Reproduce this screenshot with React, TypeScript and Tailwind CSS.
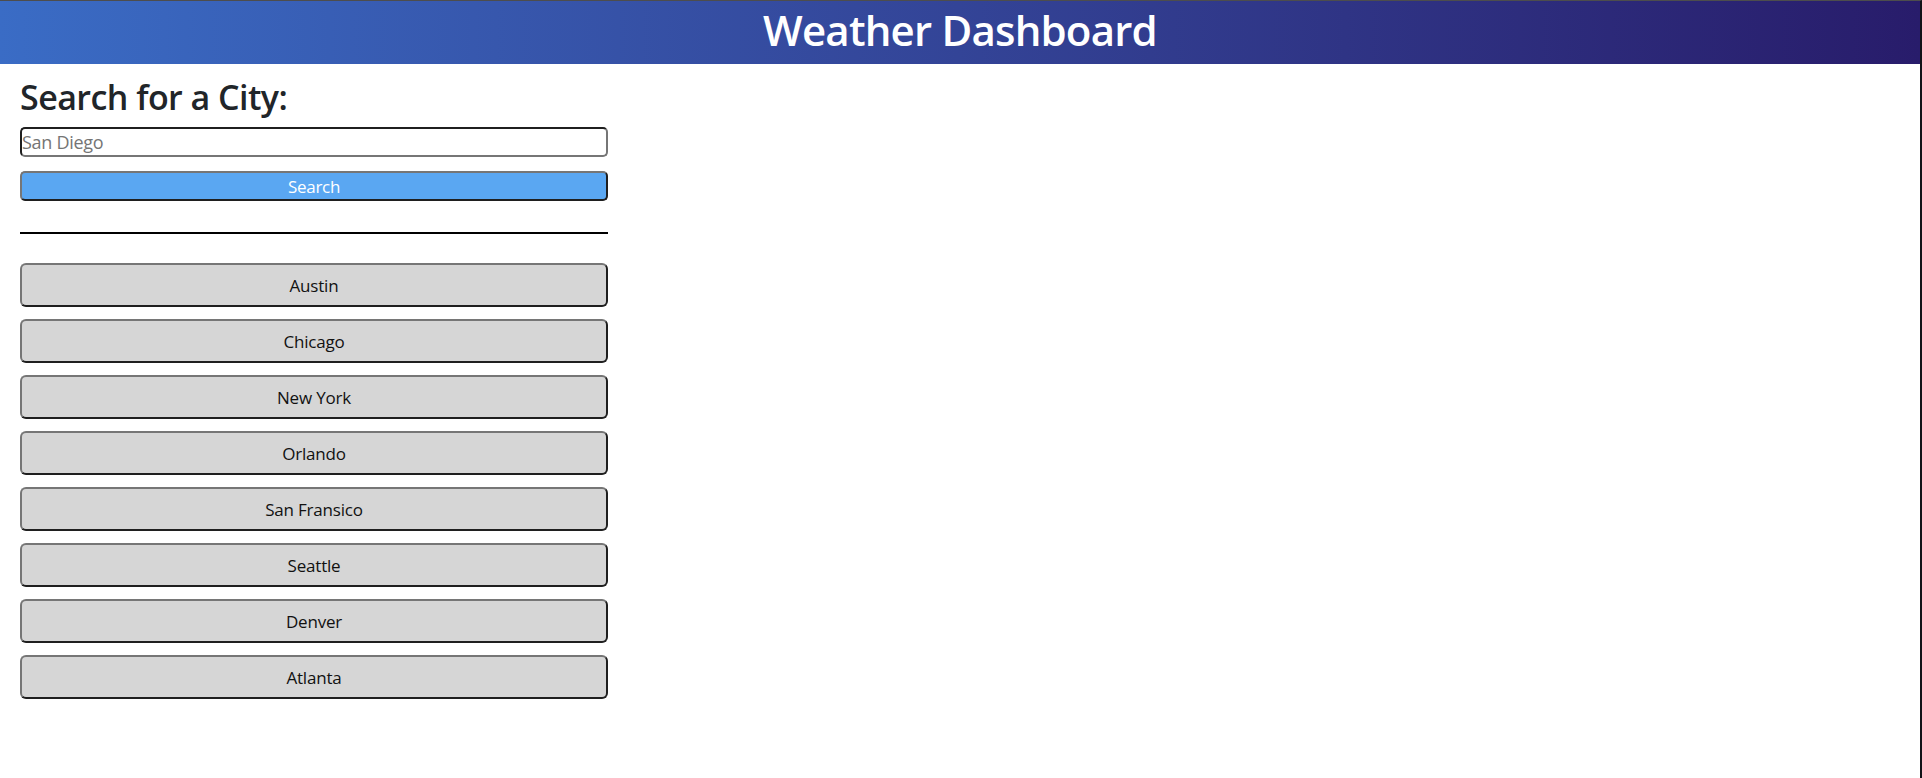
import React from "react";

const cities = ["Austin", "Chicago", "New York", "Orlando", "San Fransico", "Seattle", "Denver", "Atlanta"];

export default function App() {
  return (
    <div className="h-[778px] w-full overflow-hidden border-t border-t-[#4d4d4d] border-r-2 border-r-[#111318] bg-white font-['Open_Sans',sans-serif]">
      <header className="flex h-[63px] items-start justify-center bg-linear-to-r from-[#3a6cc5] to-[#281c6b]">
        <h1 className="pt-[4px] text-[42px] font-semibold leading-[50px] tracking-[-0.8px] text-white">Weather Dashboard</h1>
      </header>
      <main className="px-5">
        <div className="w-[588px]">
          <h2 className="pt-[8px] text-[34px] font-semibold leading-[50px] tracking-[-0.55px] text-[#212529]">Search for a City:</h2>
          <input
            type="text"
            placeholder="San Diego"
            className="mt-[5px] block h-[30px] w-full rounded-[5px] border-2 border-t-[#1f1f1f] border-l-[#1f1f1f] border-b-[#767676] border-r-[#767676] px-0 text-[18px] tracking-[-0.3px] text-[#212529] placeholder:text-[#757575] outline-none"
          />
          <button className="mt-[14px] block h-[30px] w-full rounded-[5px] border-2 border-t-[#767676] border-l-[#767676] border-b-[#1f1f1f] border-r-[#1f1f1f] bg-[#5aa7f2] text-[17px] leading-none tracking-[-0.3px] text-white">
            Search
          </button>
          <div className="mt-[31px] h-[2px] w-full bg-black" />
          <div className="mt-[29px] flex flex-col gap-[12px]">
            {cities.map((c) => (
              <button
                key={c}
                className="block h-[44px] w-full rounded-[6px] border-2 border-t-[#767676] border-l-[#767676] border-b-[#1f1f1f] border-r-[#1f1f1f] bg-[#d6d6d6] text-[17px] leading-none tracking-[-0.2px] text-[#111]"
              >
                {c}
              </button>
            ))}
          </div>
        </div>
      </main>
    </div>
  );
}
